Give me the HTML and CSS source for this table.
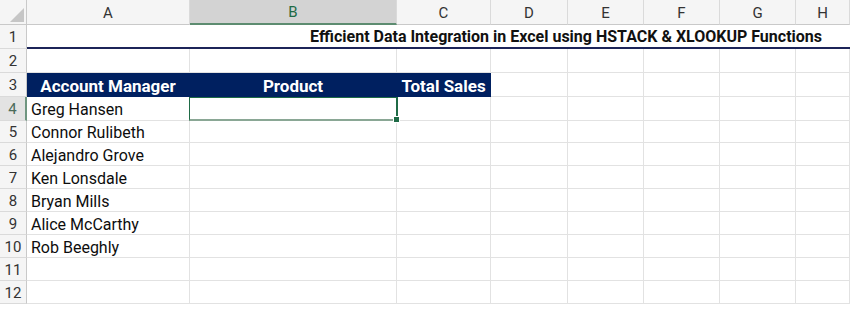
FILE: index.html
```html
<!DOCTYPE html>
<html>
<head>
<meta charset="utf-8">
<link rel="stylesheet" href="styles.css">
</head>
<body>
<div class="sheet">
  <div class="corner"><svg width="27" height="25" viewBox="0 0 27 25"><polygon points="24,8 24,22 10,22" fill="#c6c6c6"/></svg></div>
  <div class="ch">A</div><div class="ch sel">B</div><div class="ch">C</div><div class="ch">D</div><div class="ch">E</div><div class="ch">F</div><div class="ch">G</div><div class="ch">H</div>

  <div class="rh r1">1</div>
  <div class="title">Efficient Data Integration in Excel using HSTACK &amp; XLOOKUP Functions</div>

  <div class="rh r1">2</div>
  <div class="c"></div><div class="c"></div><div class="c"></div><div class="c"></div><div class="c"></div><div class="c"></div><div class="c"></div><div class="c"></div>

  <div class="rh r1">3</div>
  <div class="hd">Account Manager</div><div class="hd">Product</div><div class="hd">Total Sales</div>
  <div class="c"></div><div class="c"></div><div class="c"></div><div class="c"></div><div class="c"></div>

  <div class="rh act">4</div>
  <div class="c name">Greg Hansen</div><div class="c active"><span class="handle"></span></div><div class="c"></div><div class="c"></div><div class="c"></div><div class="c"></div><div class="c"></div><div class="c"></div>

  <div class="rh">5</div>
  <div class="c name">Connor Rulibeth</div><div class="c"></div><div class="c"></div><div class="c"></div><div class="c"></div><div class="c"></div><div class="c"></div><div class="c"></div>

  <div class="rh">6</div>
  <div class="c name">Alejandro Grove</div><div class="c"></div><div class="c"></div><div class="c"></div><div class="c"></div><div class="c"></div><div class="c"></div><div class="c"></div>

  <div class="rh">7</div>
  <div class="c name">Ken Lonsdale</div><div class="c"></div><div class="c"></div><div class="c"></div><div class="c"></div><div class="c"></div><div class="c"></div><div class="c"></div>

  <div class="rh">8</div>
  <div class="c name">Bryan Mills</div><div class="c"></div><div class="c"></div><div class="c"></div><div class="c"></div><div class="c"></div><div class="c"></div><div class="c"></div>

  <div class="rh">9</div>
  <div class="c name">Alice McCarthy</div><div class="c"></div><div class="c"></div><div class="c"></div><div class="c"></div><div class="c"></div><div class="c"></div><div class="c"></div>

  <div class="rh">10</div>
  <div class="c name">Rob Beeghly</div><div class="c"></div><div class="c"></div><div class="c"></div><div class="c"></div><div class="c"></div><div class="c"></div><div class="c"></div>

  <div class="rh">11</div>
  <div class="c"></div><div class="c"></div><div class="c"></div><div class="c"></div><div class="c"></div><div class="c"></div><div class="c"></div><div class="c"></div>

  <div class="rh">12</div>
  <div class="c"></div><div class="c"></div><div class="c"></div><div class="c"></div><div class="c"></div><div class="c"></div><div class="c"></div><div class="c"></div>
</div>
</body>
</html>
```
FILE: styles.css
```css
html, body {
  margin: 0;
  padding: 0;
  background: #ffffff;
}
body {
  font-family: Roboto, "Liberation Sans", sans-serif;
  width: 850px;
  height: 310px;
  overflow: hidden;
}
.sheet {
  display: grid;
  grid-template-columns: 27px 163px 207px 94px 77px 76px 76px 76px 54px;
  grid-template-rows: 25px 24px 24px 24px 24px 22px repeat(7, 23px);
  width: 850px;
}
.sheet > div {
  box-sizing: border-box;
}
.corner {
  background: #f5f5f5;
  border-right: 1px solid #c9c9c9;
  border-bottom: 1px solid #c9c9c9;
}
.corner svg { display: block; }
.ch {
  background: #f5f5f5;
  border-right: 1px solid #dadada;
  border-bottom: 1px solid #c9c9c9;
  color: #333333;
  font-size: 15px;
  display: flex;
  align-items: center;
  justify-content: center;
  padding-top: 1px;
}
.ch.sel {
  background: #d3d3d3;
  color: #1f6b46;
  border-bottom: 2px solid #5d8c70;
}
.rh {
  background: #f5f5f5;
  border-right: 1px solid #c9c9c9;
  border-bottom: 1px solid #dadada;
  color: #333333;
  font-size: 15px;
  display: flex;
  align-items: center;
  justify-content: center;
  padding-top: 1px;
}
.rh.act {
  background: #e3e3e3;
  color: #4b6b5a;
  border-right: 2px solid #6f9680;
}
.title {
  grid-column: 2 / 10;
  border-bottom: 2px solid #1c2458;
  display: flex;
  align-items: center;
  justify-content: flex-end;
  padding-right: 28px;
  padding-top: 1px;
  font-weight: 700;
  font-size: 16px;
  color: #111111;
  white-space: nowrap;
}
.c {
  border-right: 1px solid #e2e2e2;
  border-bottom: 1px solid #e2e2e2;
}
.name {
  display: flex;
  align-items: center;
  padding-left: 4px;
  padding-top: 2px;
  font-size: 16px;
  color: #0d0d0d;
  white-space: nowrap;
}
.hd {
  background: #002060;
  border-bottom: 1px solid #002060;
  border-right: 1px solid #002060;
  color: #ffffff;
  font-weight: 700;
  font-size: 17px;
  display: flex;
  align-items: center;
  justify-content: center;
  padding-top: 2px;
  white-space: nowrap;
}
.active {
  position: relative;
  border: 0;
}
.active::before {
  content: "";
  position: absolute;
  left: -1px;
  top: 0;
  right: -1px;
  bottom: 0;
  border: 1px solid #1f6b46;
  border-right-width: 2px;
  border-bottom: 2px solid #8aa795;
}
.handle {
  position: absolute;
  right: -3px;
  bottom: -2px;
  width: 5px;
  height: 5px;
  background: #1f6b46;
  border: 1px solid #ffffff;
  z-index: 2;
}
```
